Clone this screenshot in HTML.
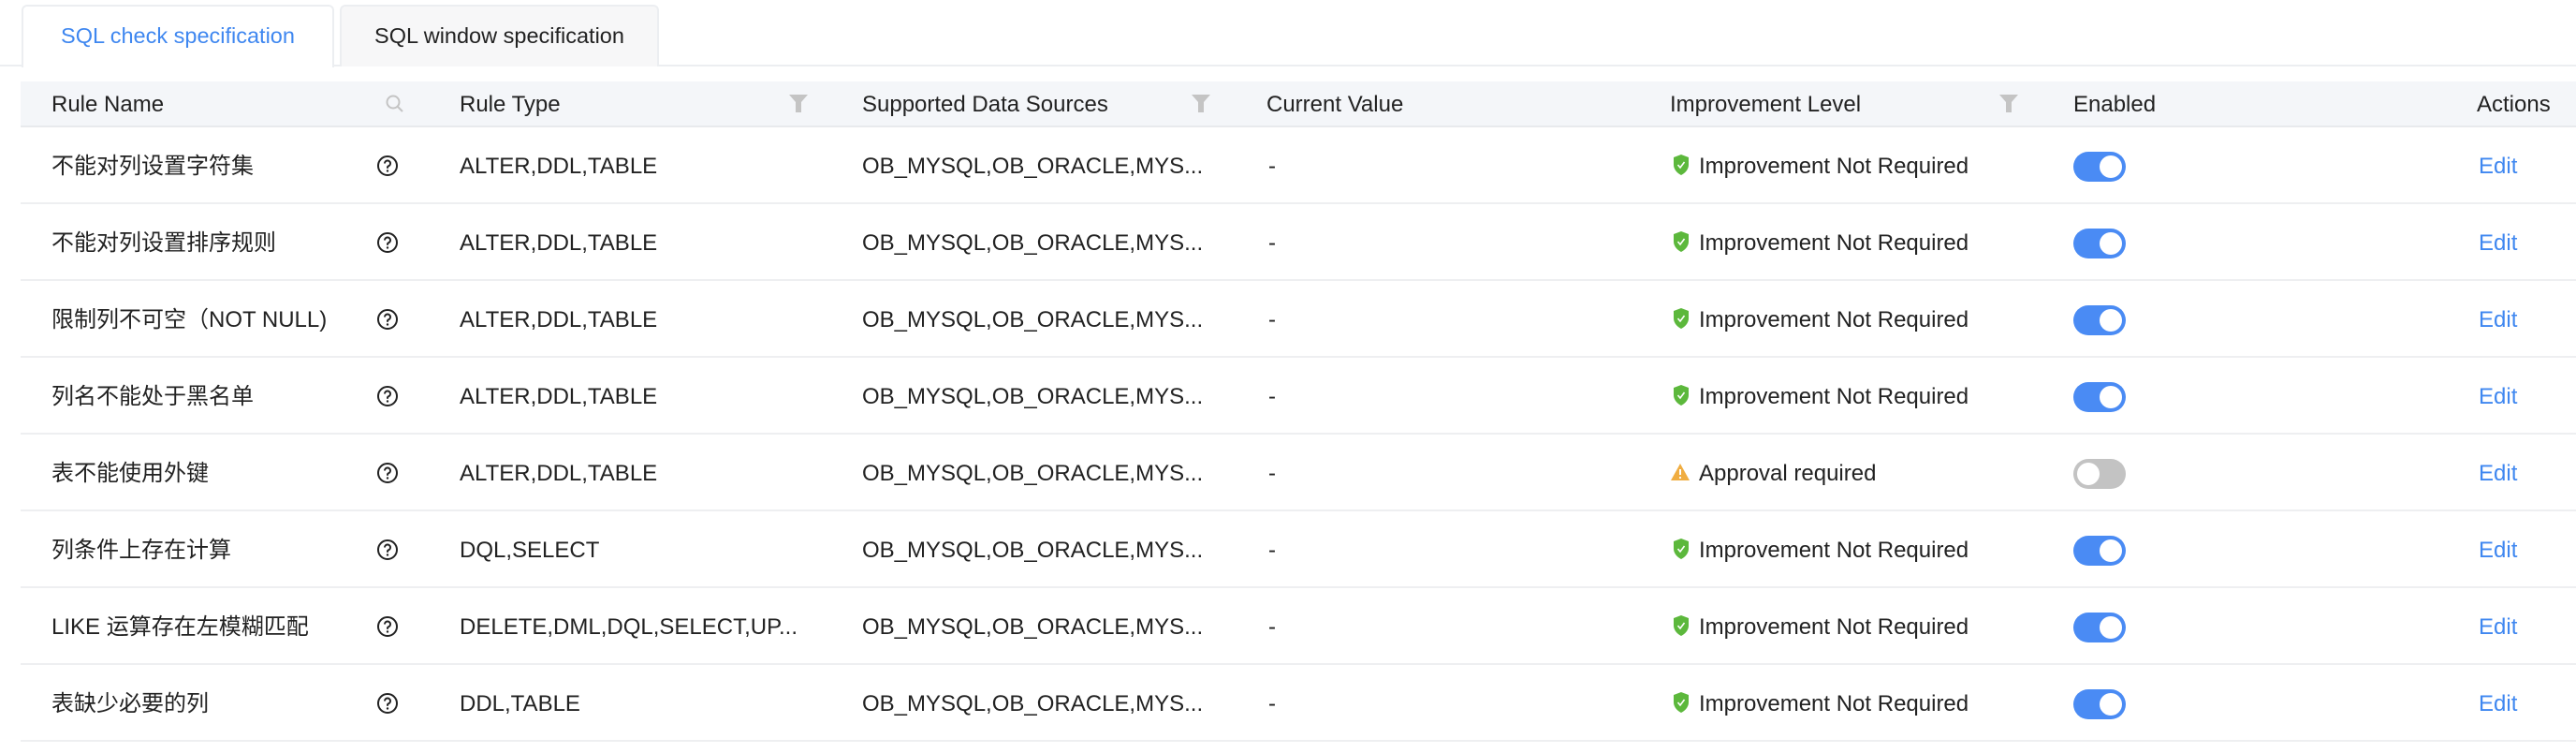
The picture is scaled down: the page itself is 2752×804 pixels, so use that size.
<!DOCTYPE html>
<html><head><meta charset="utf-8"><style>
*{margin:0;padding:0;box-sizing:border-box}
body{width:2752px;height:804px;background:#fff;font-family:"Liberation Sans","Noto Sans CJK SC",sans-serif;color:#222;font-size:24px;position:relative;overflow:hidden}
.tab{position:absolute;top:5px;height:66px;border:2px solid #eceef1;border-bottom:none;border-radius:6px 6px 0 0;line-height:62px;text-align:center;font-size:23.5px}
.tabline{position:absolute;left:0;right:0;top:69px;height:2px;background:#eceef1}
.hdr{position:absolute;left:22px;right:0;top:87px;height:49px;background:#f4f6f9;border-bottom:2px solid #e8eaed}
.a{position:absolute;white-space:nowrap;line-height:28px;height:28px}
.s{position:absolute}
.row{position:absolute;left:22px;right:0;height:82px;border-bottom:2px solid #eeeff1}
.tg{position:absolute;width:56px;height:32px;border-radius:16px;background:#4a8bf4}
.tg::after{content:"";position:absolute;top:4px;right:4px;width:24px;height:24px;border-radius:50%;background:#fff}
.tg.off{background:#c3c3c3}
.tg.off::after{left:4px;right:auto}
.edit{color:#3f87f0}
</style></head><body>
<div class="tabline"></div>
<div class="tab" style="left:23px;width:334px;background:#fff;color:#3f87f0;height:67px">SQL check specification</div>
<div class="tab" style="left:363px;width:341px;background:#f7f7f8;color:#222">SQL window specification</div>
<div class="hdr"></div>
<div class="a" style="left:55px;top:98px">Rule Name</div>
<svg class="s" style="left:410px;top:99px" width="24" height="24" viewBox="0 0 24 24"><circle cx="10" cy="10" r="6.5" fill="none" stroke="#c4c4c4" stroke-width="2"/><path d="M15 15l5 5" stroke="#c4c4c4" stroke-width="2"/></svg>
<div class="a" style="left:491px;top:98px">Rule Type</div>
<div class="a" style="left:921px;top:98px">Supported Data Sources</div>
<div class="a" style="left:1353px;top:98px">Current Value</div>
<div class="a" style="left:1784px;top:98px">Improvement Level</div>
<div class="a" style="left:2215px;top:98px">Enabled</div>
<div class="a" style="left:2646px;top:98px">Actions</div>
<svg class="s" style="left:841px;top:99px" width="24" height="24" viewBox="0 0 24 24"><path d="M2 2h20l-7 8v11h-6V10z" fill="#c4c4c4"/></svg>
<svg class="s" style="left:1271px;top:99px" width="24" height="24" viewBox="0 0 24 24"><path d="M2 2h20l-7 8v11h-6V10z" fill="#c4c4c4"/></svg>
<svg class="s" style="left:2134px;top:99px" width="24" height="24" viewBox="0 0 24 24"><path d="M2 2h20l-7 8v11h-6V10z" fill="#c4c4c4"/></svg>
<div id="rows"></div>
<script>
var d=[["不能对列设置字符集","ALTER,DDL,TABLE",1],["不能对列设置排序规则","ALTER,DDL,TABLE",1],["限制列不可空（NOT NULL)","ALTER,DDL,TABLE",1],["列名不能处于黑名单","ALTER,DDL,TABLE",1],["表不能使用外键","ALTER,DDL,TABLE",0],["列条件上存在计算","DQL,SELECT",1],["LIKE 运算存在左模糊匹配","DELETE,DML,DQL,SELECT,UP...",1],["表缺少必要的列","DDL,TABLE",1]];
var h="";
d.forEach(function(r,i){var t=136+i*82;var c=t+41;
h+='<div class="row" style="top:'+t+'px"></div>';
h+='<div class="a" style="left:55px;top:'+(c-13)+'px">'+r[0]+'</div>';
h+='<svg class="s" style="left:402px;top:'+(c-12)+'px" width="24" height="24" viewBox="0 0 24 24"><circle cx="12" cy="12" r="10" fill="none" stroke="#222" stroke-width="2"/><path d="M9 9.5a3 3 0 1 1 4 2.8c-.8.4-1 1-1 1.7v.8" fill="none" stroke="#222" stroke-width="2"/><circle cx="12" cy="17.5" r="1.2" fill="#222"/></svg>';
h+='<div class="a" style="left:491px;top:'+(c-13)+'px">'+r[1]+'</div>';
h+='<div class="a" style="left:921px;top:'+(c-13)+'px">OB_MYSQL,OB_ORACLE,MYS...</div>';
h+='<div class="a" style="left:1355px;top:'+(c-13)+'px">-</div>';
if(r[2]){h+='<svg class="s" style="left:1786px;top:'+(c-13)+'px" width="20" height="24" viewBox="0 0 20 24"><path d="M10 1l8 3v8c0 5-4 9-8 11C6 21 2 17 2 12V4z" fill="#5cb83c"/><path d="M6.5 12l2.5 3 4.5-6" fill="none" stroke="#fff" stroke-width="1.6"/></svg><div class="a" style="left:1815px;top:'+(c-13)+'px">Improvement Not Required</div>';}
else{h+='<svg class="s" style="left:1784px;top:'+(c-12)+'px" width="22" height="22" viewBox="0 0 22 22"><path d="M11 2l10 18H1z" fill="#f0ad41"/><path d="M11 8v6" stroke="#fff" stroke-width="2"/><circle cx="11" cy="17" r="1.1" fill="#fff"/></svg><div class="a" style="left:1815px;top:'+(c-13)+'px">Approval required</div>';}
h+='<div class="tg'+(r[2]?'':' off')+'" style="left:2215px;top:'+(c-15)+'px"></div>';
h+='<div class="a edit" style="left:2648px;top:'+(c-13)+'px">Edit</div>';
});
document.getElementById("rows").innerHTML=h;
</script>
</body></html>
